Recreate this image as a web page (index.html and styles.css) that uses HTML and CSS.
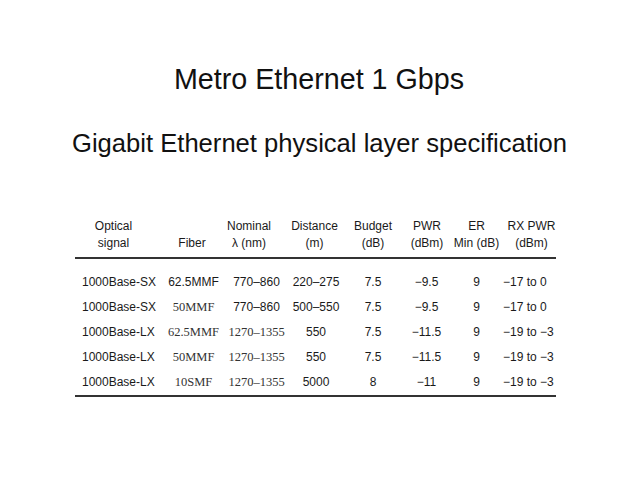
FILE: index.html
```html
<!DOCTYPE html>
<html>
<head>
<meta charset="utf-8">
<link rel="stylesheet" href="styles.css">
</head>
<body>
<div class="slide">
  <h1 class="title">Metro Ethernet 1 Gbps</h1>
  <h2 class="subtitle">Gigabit Ethernet physical layer specification</h2>
  <table class="spec">
    <colgroup>
      <col class="c1"><col class="c2"><col class="c3"><col class="c4">
      <col class="c5"><col class="c6"><col class="c7"><col class="c8">
    </colgroup>
    <thead>
      <tr>
        <th class="h1">Optical<br>signal</th>
        <th class="h2"><br>Fiber</th>
        <th class="h3">Nominal<br>λ (nm)</th>
        <th class="h4">Distance<br>(m)</th>
        <th>Budget<br>(dB)</th>
        <th class="h6">PWR<br>(dBm)</th>
        <th>ER<br>Min (dB)</th>
        <th class="h8">RX PWR<br>(dBm)</th>
      </tr>
    </thead>
    <tbody>
      <tr class="first">
        <td class="name">1000Base-SX</td>
        <td class="fib">62.5MMF</td>
        <td class="wl">770–860</td>
        <td>220–275</td>
        <td>7.5</td>
        <td class="pwr">−9.5</td>
        <td>9</td>
        <td class="rx">−17 to 0</td>
      </tr>
      <tr>
        <td class="name">1000Base-SX</td>
        <td class="fib serif">50MMF</td>
        <td class="wl">770–860</td>
        <td>500–550</td>
        <td>7.5</td>
        <td class="pwr">−9.5</td>
        <td>9</td>
        <td class="rx">−17 to 0</td>
      </tr>
      <tr>
        <td class="name">1000Base-LX</td>
        <td class="fib serif">62.5MMF</td>
        <td class="serif wl">1270–1355</td>
        <td>550</td>
        <td>7.5</td>
        <td class="pwr">−11.5</td>
        <td>9</td>
        <td class="rx">−19 to −3</td>
      </tr>
      <tr>
        <td class="name">1000Base-LX</td>
        <td class="fib serif">50MMF</td>
        <td class="serif wl">1270–1355</td>
        <td>550</td>
        <td>7.5</td>
        <td class="pwr">−11.5</td>
        <td>9</td>
        <td class="rx">−19 to −3</td>
      </tr>
      <tr class="last">
        <td class="name">1000Base-LX</td>
        <td class="fib serif">10SMF</td>
        <td class="serif wl">1270–1355</td>
        <td>5000</td>
        <td>8</td>
        <td class="pwr">−11</td>
        <td>9</td>
        <td class="rx">−19 to −3</td>
      </tr>
    </tbody>
  </table>
</div>
</body>
</html>
```

FILE: styles.css
```css
html, body {
  margin: 0;
  padding: 0;
  background: #ffffff;
}

.slide {
  width: 638px;
  height: 493px;
  font-family: "Liberation Sans", Arial, sans-serif;
  color: #111111;
  overflow: hidden;
  padding-top: 62px;
  box-sizing: border-box;
}

.title {
  margin: 0;
  font-weight: normal;
  font-size: 28.7px;
  line-height: 34px;
  text-align: center;
}

.subtitle {
  margin: 32px 0 0 72px;
  font-weight: normal;
  font-size: 25.6px;
  line-height: 30px;
  text-align: left;
}

.spec {
  margin: 60px 0 0 75px;
  border-collapse: collapse;
  table-layout: fixed;
  width: 481px;
  font-size: 12px;
  color: #1a1a1a;
  border-bottom: 2px solid #333333;
}

.c1 { width: 85px; }
.c2 { width: 64px; }
.c3 { width: 62px; }
.c4 { width: 60px; }
.c5 { width: 54px; }
.c6 { width: 50px; }
.c7 { width: 53px; }
.c8 { width: 53px; }

.spec th {
  font-weight: normal;
  line-height: 17px;
  padding: 0 0 5px 0;
  text-align: center;
  vertical-align: top;
  border-bottom: 2px solid #333333;
  white-space: nowrap;
}

.spec th.h1 { padding-right: 8px; }
.spec th.h3 { padding-right: 12px; }
.spec th.h4 { padding-right: 3px; }
.spec th.h6 { padding-left: 4px; }
.spec th.h8 { padding-left: 4px; }

.spec td {
  height: 25px;
  line-height: 25px;
  padding: 0;
  text-align: center;
  white-space: nowrap;
}

.spec tr.first td {
  padding-top: 11px;
}

.spec td.name {
  text-align: left;
  padding-left: 7px;
}

.spec td.fib { padding-left: 3px; }
.spec td.wl { padding-left: 3px; }
.spec td.pwr { padding-left: 3px; }
.spec td.rx { padding-right: 12px; }

.spec td.serif {
  font-family: "Liberation Serif", "Times New Roman", serif;
  font-size: 12.5px;
  color: #333333;
}
```
